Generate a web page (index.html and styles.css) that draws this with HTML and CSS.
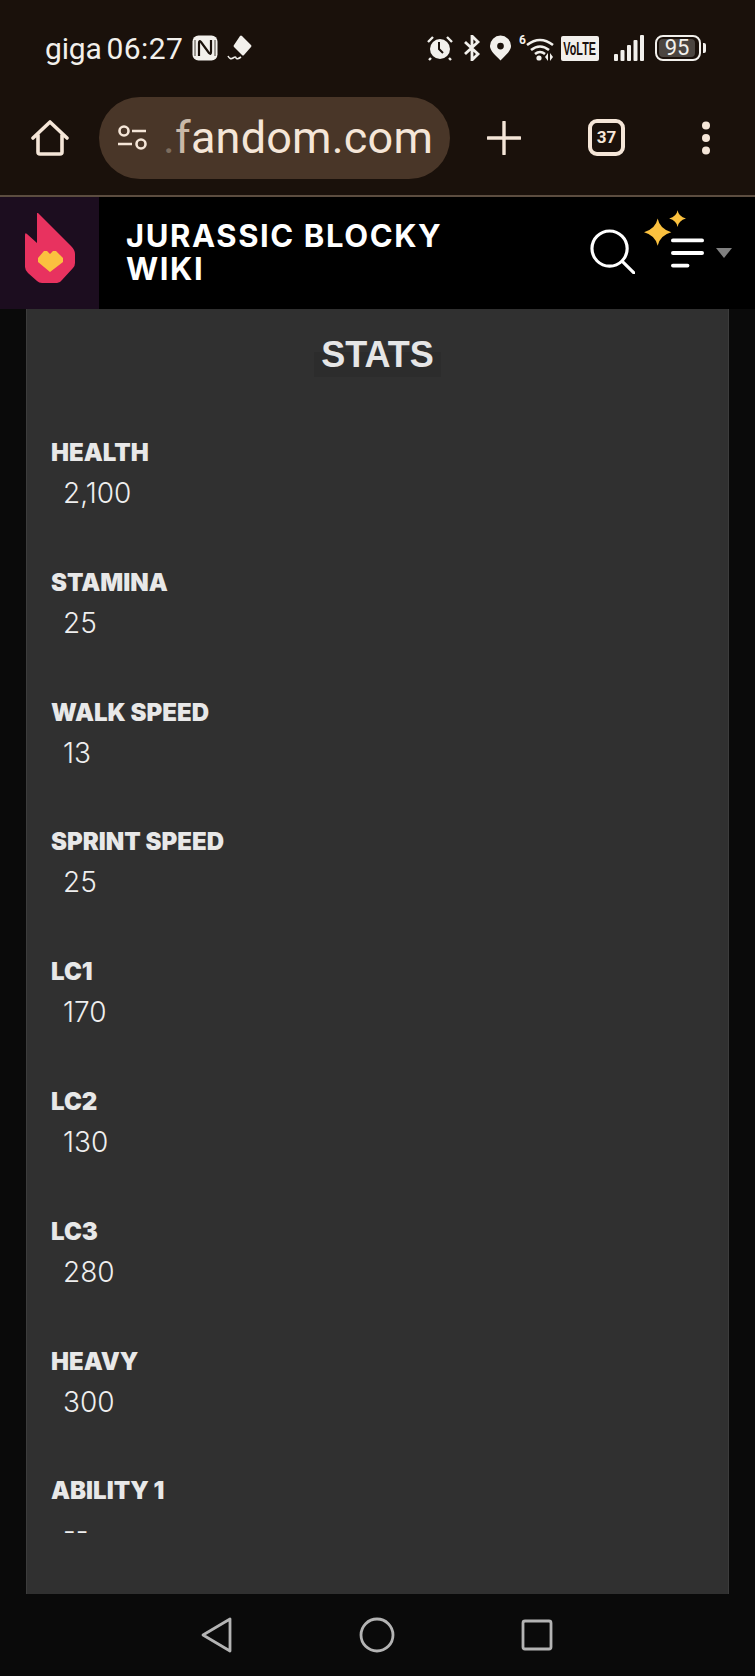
FILE: index.html
```html
<!DOCTYPE html>
<html lang="en">
<head>
<meta charset="utf-8">
<title>Jurassic Blocky Wiki</title>
<link rel="stylesheet" href="styles.css">
</head>
<body>
<div class="chrome">
  <div class="status">
    <div class="status-left">
      <span class="carrier">giga</span>
      <span class="clock">06:27</span>
      <svg class="ic-nfc" viewBox="0 0 26 26"><rect x="0.5" y="0.5" width="25" height="25" rx="6" fill="#f2f0ec"/><path d="M7 21V8q0-3 2-1l8 11q2 2 2-1V5" fill="none" stroke="#1a110b" stroke-width="2.200"/><path d="M3 5v16M23 5v16" stroke="#1a110b" stroke-width="0.800"/></svg>
      <svg class="ic-pen" viewBox="0 0 26 26"><path d="M15 1l9 9q1 1 0 2l-7 8q-1 1-2 0l-8-8q-1-1 0-2l6-9q1-1 2 0z" fill="#f2f0ec"/><path d="M1 21q2 4 5 2t3 0q1 2 5-1" fill="none" stroke="#f2f0ec" stroke-width="1.600"/></svg>
    </div>
    <div class="status-right">
      <svg class="ic-alarm" viewBox="0 0 26 26"><circle cx="13" cy="14" r="10" fill="#f2f0ec"/><path d="M12 7v7l4 4" fill="none" stroke="#1a110b" stroke-width="2"/><path d="M1 7l5-5M25 7l-5-5M4 23l-2 2M22 23l2 2" stroke="#f2f0ec" stroke-width="2.400"/></svg>
      <svg class="ic-bt" viewBox="0 0 18 26"><path d="M2 7l13 12-6 6V1l6 6L2 19" fill="none" stroke="#f2f0ec" stroke-width="2.800"/></svg>
      <svg class="ic-pin" viewBox="0 0 24 26"><path fill-rule="evenodd" d="M12 26C7 21 1 16 1 11a11 11 0 0 1 22 0c0 5-6 10-11 15zm0-11.500a3.500 3.500 0 1 0 0-7 3.500 3.500 0 0 0 0 7z" fill="#f2f0ec"/></svg>
      <svg class="ic-wifi" viewBox="0 0 36 28"><text x="0" y="10" class="wifi-six">6</text><path d="M8 11q13-10 26 0M12 16q9-7 18 0M16 20q5-4 10 0" fill="none" stroke="#f2f0ec" stroke-width="2.600"/><circle cx="20" cy="24" r="2.600" fill="#f2f0ec"/><path d="M29 19v8l-3-4zM31 19v8l3-4z" fill="#f2f0ec"/></svg>
      <span class="volte"><span class="volte-text">VoLTE</span></span>
      <svg class="ic-signal" viewBox="0 0 30 26"><g fill="#f2f0ec"><rect x="0" y="19" width="4" height="7" rx="1"/><rect x="6.500" y="15" width="4" height="11" rx="1"/><rect x="13" y="10" width="4" height="16" rx="1"/><rect x="19.500" y="5" width="4" height="21" rx="1"/><rect x="26" y="0" width="4" height="26" rx="1"/></g></svg>
      <span class="battery"><span class="battery-body"><span class="battery-fill">95</span></span><span class="battery-tip"></span></span>
    </div>
  </div>
  <div class="toolbar">
    <svg class="ic-home" viewBox="0 0 38 38"><path d="M2 19L19 3l17 16M7 16v17q0 2 2 2h20q2 0 2-2V16" fill="none" stroke="#f5e6d8" stroke-width="3.600" stroke-linecap="round" stroke-linejoin="round"/></svg>
    <div class="omnibox">
      <svg class="ic-tune" viewBox="0 0 32 28"><g fill="none" stroke="#f5e6d8" stroke-width="2.600"><circle cx="8" cy="7" r="4.500"/><path d="M16 7h14M2 20h14"/><circle cx="25" cy="20" r="4.500"/></g></svg>
      <span class="url"><span class="url-dot">.</span><span class="url-f">f</span>andom.com</span>
    </div>
    <svg class="ic-plus" viewBox="0 0 34 34"><path d="M17 1v32M1 17h32" stroke="#f5e6d8" stroke-width="3.400" stroke-linecap="round"/></svg>
    <span class="tabs">37</span>
    <svg class="ic-more" viewBox="0 0 10 34"><g fill="#f5e6d8"><circle cx="5" cy="4.500" r="4"/><circle cx="5" cy="17" r="4"/><circle cx="5" cy="29.500" r="4"/></g></svg>
  </div>
</div>

<header class="wiki-bar">
  <div class="logo-tile">
    <svg class="ic-flame" viewBox="0 0 50 70"><path d="M13 0L46 33q4 4 4 8v9q0 3-2 5L37 67q-2 3-5 3H17q-3 0-5-2l-9-8q-3-3-3-6V22q0-3 2-1l10 9V1q0-2 1-1z" fill="#e8325f"/><path d="M13 45l6-7h3l3 3 3-3h3l7 7v4L25 59 13 49z" fill="#fbc13f"/></svg>
  </div>
  <h1 class="wiki-title">JURASSIC BLOCKY<br>WIKI</h1>
  <div class="wiki-actions">
    <svg class="ic-search" viewBox="0 0 46 46"><circle cx="20" cy="20" r="18" fill="none" stroke="#fff" stroke-width="3.200"/><path d="M33 33l12 12" stroke="#fff" stroke-width="3.200" stroke-linecap="round"/></svg>
    <div class="menu-wrap">
      <svg class="ic-spark" viewBox="0 0 42 36"><g fill="#fbc13f"><path d="M14 8q2 10 13 13-11 3-13 13-2-10-13-13 11-3 13-13z"/><path d="M33 0q1 6 8 8-7 2-8 8-1-6-8-8 7-2 8-8z"/></g></svg>
      <svg class="ic-menu" viewBox="0 0 34 34"><g stroke="#fff" stroke-width="4" stroke-linecap="round"><path d="M2 4h30M2 17h30M2 30h15"/></g></svg>
    </div>
    <span class="caret"></span>
  </div>
</header>

<main class="page">
  <section class="panel">
    <div class="panel-head"><h2 class="panel-title">STATS</h2></div>
    <dl class="stats">
      <div class="stat"><dt>HEALTH</dt><dd>2,100</dd></div>
      <div class="stat"><dt>STAMINA</dt><dd>25</dd></div>
      <div class="stat"><dt>WALK SPEED</dt><dd>13</dd></div>
      <div class="stat"><dt>SPRINT SPEED</dt><dd>25</dd></div>
      <div class="stat"><dt>LC1</dt><dd>170</dd></div>
      <div class="stat"><dt>LC2</dt><dd>130</dd></div>
      <div class="stat"><dt>LC3</dt><dd>280</dd></div>
      <div class="stat"><dt>HEAVY</dt><dd>300</dd></div>
      <div class="stat"><dt>ABILITY 1</dt><dd>--</dd></div>
    </dl>
  </section>
</main>

<nav class="android-nav">
  <svg class="ic-back" viewBox="0 0 32 36"><path d="M30 2v32L3 18z" fill="none" stroke="#b4b4b4" stroke-width="2.800" stroke-linejoin="round"/></svg>
  <svg class="ic-circle" viewBox="0 0 36 36"><circle cx="18" cy="18" r="16" fill="none" stroke="#b4b4b4" stroke-width="2.800"/></svg>
  <svg class="ic-square" viewBox="0 0 32 32"><rect x="2" y="2" width="28" height="28" rx="2" fill="none" stroke="#b4b4b4" stroke-width="2.800"/></svg>
</nav>
</body>
</html>
```
FILE: styles.css
```css
* { box-sizing: border-box; }
html, body { margin: 0; padding: 0; }
body {
  width: 755px;
  height: 1676px;
  overflow: hidden;
  display: flex;
  flex-direction: column;
  background: #0a0a0a;
  font-family: "Roboto", "Liberation Sans", sans-serif;
  color: #fff;
}
svg { display: block; flex: none; }

.chrome {
  height: 197px;
  background: #1a110b;
  border-bottom: 2px solid #5c4d40;
  display: flex;
  flex-direction: column;
}
.status {
  height: 96px;
  padding: 0 49px 0 45px;
  display: flex;
  align-items: center;
  justify-content: space-between;
  color: #f2f0ec;
}
.status-left, .status-right { display: flex; align-items: center; }
.carrier { font-size: 30px; font-weight: 400; letter-spacing: -0.2px; margin-right: 5px; }
.clock { font-size: 30px; font-weight: 400; letter-spacing: 0.4px; margin-right: 9px; }
.ic-nfc { width: 26px; height: 26px; margin-right: 9px; }
.ic-pen { width: 26px; height: 26px; }
.ic-alarm { width: 26px; height: 26px; margin-right: 10px; }
.ic-bt { width: 18px; height: 26px; margin-right: 8px; }
.ic-pin { width: 23px; height: 26px; margin-right: 7px; }
.ic-wifi { width: 36px; height: 28px; margin-right: 6px; }
.wifi-six { font-size: 12px; font-weight: 700; fill: #f2f0ec; font-family: "Roboto", sans-serif; }
.volte {
  width: 38px; height: 25px;
  background: #f2f0ec;
  border-radius: 2px;
  display: flex;
  align-items: center;
  justify-content: center;
  margin-right: 15px;
  overflow: hidden;
}
.volte-text {
  flex: none;
  color: #1a110b;
  font-family: "Liberation Sans", sans-serif;
  font-size: 15px;
  font-weight: 700;
  line-height: 25px;
  white-space: nowrap;
  transform: scale(0.72, 1.2);
}
.ic-signal { width: 30px; height: 26px; margin-right: 11px; }
.battery { display: flex; align-items: center; }
.battery-body {
  width: 46px; height: 26px;
  border: 2px solid #f2f0ec;
  border-radius: 8px;
  padding: 2px;
  display: flex;
}
.battery-fill {
  width: 36px;
  background: #4b4540;
  border-radius: 4px;
  font-size: 22px;
  line-height: 18px;
  text-align: center;
  color: #f2f0ec;
}
.battery-tip { width: 3px; height: 10px; background: #f2f0ec; border-radius: 0 2px 2px 0; margin-left: 2px; }

.toolbar { flex: 1; display: flex; align-items: center; padding: 0 0 16px 31px; }
.ic-home { width: 38px; height: 38px; margin-right: 30px; }
.omnibox {
  width: 351px;
  height: 82px;
  border-radius: 41px;
  background: #493628;
  display: flex;
  align-items: center;
  padding-left: 17px;
  overflow: hidden;
  margin-right: 37px;
}
.ic-tune { width: 32px; height: 28px; margin-right: 15px; }
.url { font-size: 45px; font-weight: 400; color: #f5e6d8; letter-spacing: 0.2px; white-space: nowrap; line-height: 50px; }
.url-dot { color: #7d6d5e; }
.url-f { color: #c9b9a9; }
.ic-plus { width: 34px; height: 34px; margin-right: 67px; }
.tabs {
  width: 37px; height: 37px;
  border: 4px solid #f5e6d8;
  border-radius: 9px;
  font-size: 17px;
  font-weight: 700;
  line-height: 29px;
  text-align: center;
  color: #f5e6d8;
  margin-right: 76px;
}
.ic-more { width: 10px; height: 34px; }

.wiki-bar { height: 112px; background: #000; display: flex; align-items: center; }
.logo-tile { width: 99px; height: 112px; padding-bottom: 10px; background: #1c0d1f; display: flex; align-items: center; justify-content: center; }
.ic-flame { width: 50px; height: 70px; }
.wiki-title {
  margin: -2px 0 0 27px;
  width: 400px;
  font-family: "Inter", "Roboto", sans-serif;
  font-size: 31px;
  line-height: 33px;
  font-weight: 700;
  letter-spacing: 1.600px;
  color: #fff;
}
.wiki-actions { margin-left: auto; display: flex; align-items: center; padding-right: 23px; }
.ic-search { width: 45px; height: 45px; margin: -4px 36px 0 0; }
.menu-wrap { position: relative; width: 33px; height: 34px; margin-right: 12px; }
.ic-menu { width: 33px; height: 34px; }
.ic-spark { position: absolute; left: -28px; top: -26px; width: 44px; height: 38px; }
.caret { width: 0; height: 0; border-left: 8.500px solid transparent; border-right: 8.500px solid transparent; border-top: 10px solid #808080; }

.page { flex: 1; min-height: 0; padding: 0 26px; display: flex; }
.panel { flex: 1; background: #303030; border-left: 1px solid #3c3c3c; border-right: 1px solid #3c3c3c; overflow: hidden; }
.panel-head { height: 80px; display: flex; justify-content: center; align-items: flex-start; padding-top: 27px; }
.panel-title {
  margin: 0;
  padding: 0 7px 3px;
  font-family: "Liberation Sans", Arial, sans-serif;
  font-size: 36px;
  line-height: 38px;
  font-weight: 700;
  color: #e6e6e6;
  background: linear-gradient(to bottom, transparent 16px, #2c2c2c 16px);
}
.stats { margin: 0; padding: 50px 0 0 24px; display: flex; flex-direction: column; gap: 44px; }
.stat { height: 85.800px; }
.stat dt {
  font-family: "Inter", "Roboto", sans-serif;
  font-size: 24px;
  font-weight: 900;
  line-height: 28px;
  color: #e8e8e8;
}
.stat dd {
  margin: 10px 0 0 12px;
  font-family: "Inter", "Roboto", sans-serif;
  font-size: 28px;
  font-weight: 300;
  line-height: 32px;
  color: #eeeeee;
}

.android-nav {
  height: 82px;
  background: #0a0a0a;
  display: flex;
  align-items: center;
  padding-left: 200px;
}
.ic-back { width: 32px; height: 36px; margin-right: 127px; }
.ic-circle { width: 36px; height: 36px; margin-right: 126px; }
.ic-square { width: 32px; height: 32px; }
```
